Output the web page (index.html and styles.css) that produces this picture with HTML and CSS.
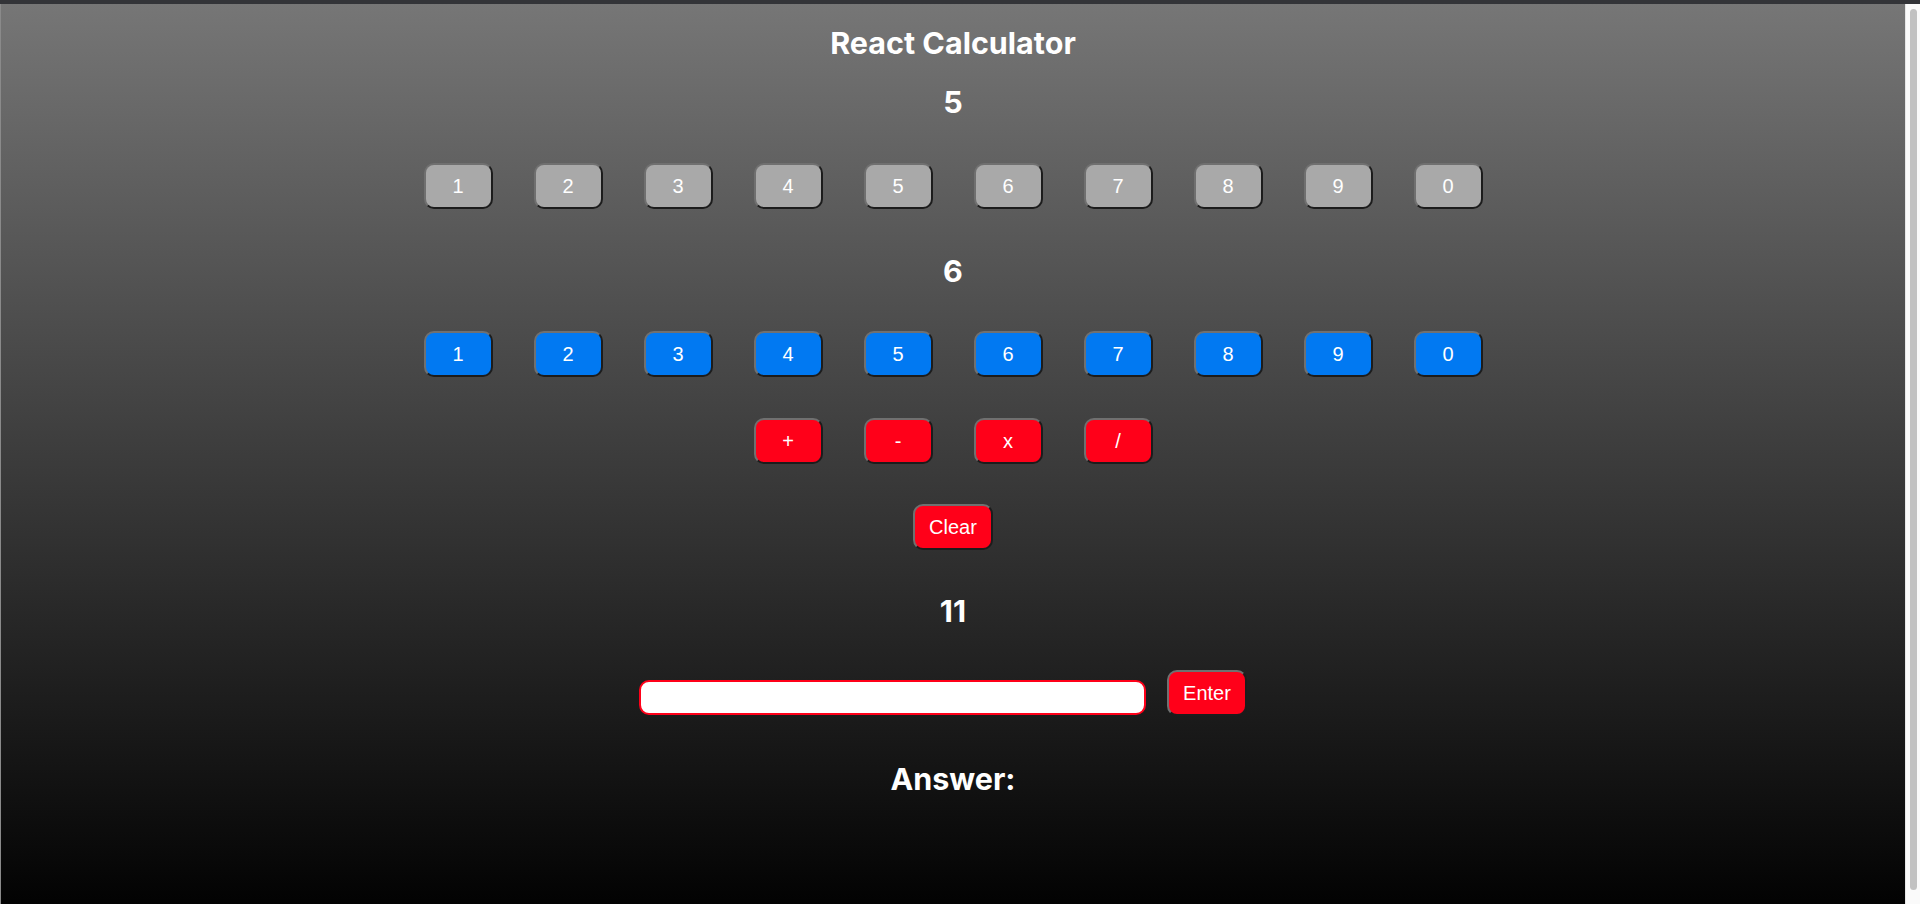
FILE: index.html
```html
<!DOCTYPE html>
<html lang="en">
<head>
<meta charset="utf-8">
<title>React Calculator</title>
<link rel="stylesheet" href="styles.css">
</head>
<body>
<div class="frame">
  <div class="topbar"></div>
  <div class="viewport">
    <main class="app">
      <h2 class="heading title">React Calculator</h2>
      <h2 class="heading first-num">5</h2>
      <div class="keys keys-first">
        <button class="btn digit grey">1</button>
        <button class="btn digit grey">2</button>
        <button class="btn digit grey">3</button>
        <button class="btn digit grey">4</button>
        <button class="btn digit grey">5</button>
        <button class="btn digit grey">6</button>
        <button class="btn digit grey">7</button>
        <button class="btn digit grey">8</button>
        <button class="btn digit grey">9</button>
        <button class="btn digit grey">0</button>
      </div>
      <h2 class="heading second-num">6</h2>
      <div class="keys keys-second">
        <button class="btn digit blue">1</button>
        <button class="btn digit blue">2</button>
        <button class="btn digit blue">3</button>
        <button class="btn digit blue">4</button>
        <button class="btn digit blue">5</button>
        <button class="btn digit blue">6</button>
        <button class="btn digit blue">7</button>
        <button class="btn digit blue">8</button>
        <button class="btn digit blue">9</button>
        <button class="btn digit blue">0</button>
      </div>
      <div class="keys keys-ops">
        <button class="btn digit red">+</button>
        <button class="btn digit red">-</button>
        <button class="btn digit red">x</button>
        <button class="btn digit red">/</button>
      </div>
      <div class="keys keys-clear">
        <button class="btn red wide">Clear</button>
      </div>
      <h2 class="heading result">11</h2>
      <div class="answer-row">
        <input class="answer-input" type="text" aria-label="Your answer">
        <button class="btn red wide enter">Enter</button>
      </div>
      <h2 class="heading answer">Answer:</h2>
    </main>
    <div class="scrollbar" aria-hidden="true">
      <div class="scrollbar-thumb"></div>
    </div>
  </div>
</div>
</body>
</html>
```

FILE: styles.css
```css
* {
  box-sizing: border-box;
}

html,
body {
  margin: 0;
  height: 100%;
  overflow: hidden;
  background: #000;
}

.frame {
  height: 100vh;
  display: flex;
  flex-direction: column;
}

.topbar {
  flex: 0 0 4px;
  background: #333438;
}

.viewport {
  flex: 1 1 auto;
  min-height: 0;
  display: flex;
  overflow: hidden;
  border-left: 1px solid #8a8a8a;
}

.app {
  flex: 1 1 auto;
  display: flex;
  flex-direction: column;
  align-items: center;
  height: 920px;
  padding: 21px 0 0;
  background: linear-gradient(to bottom, #767676 0%, #000 100%);
  color: #fff;
}

.scrollbar {
  flex: 0 0 15px;
  padding: 5px 3px 14px 4px;
  background: #fafafa;
  border-left: 1px solid #e6e6e6;
}

.scrollbar-thumb {
  height: 100%;
  background: #c1c1c1;
  border-radius: 4px;
}

.heading {
  margin: 0;
  font-family: Inter, "Noto Sans", sans-serif;
  font-weight: 700;
  font-size: 30.5px;
  line-height: 36px;
}

.first-num { margin-top: 23px; }
.keys-first { margin-top: 43px; }
.second-num { margin-top: 44px; }
.keys-second { margin-top: 42px; }
.keys-ops { margin-top: 41px; }
.keys-clear { margin-top: 40px; }
.result { margin-top: 43px; }
.answer-row { margin-top: 41px; }
.answer { margin-top: 45px; }

.keys {
  display: flex;
  justify-content: center;
  gap: 41px;
}

.btn {
  height: 46px;
  padding: 0 14px;
  border: 2px solid;
  border-color: #707070 #1c1c1c #1c1c1c #707070;
  border-radius: 10px;
  color: #fff;
  font-family: "Liberation Sans", Arial, sans-serif;
  font-size: 20px;
  line-height: 1;
  cursor: pointer;
}

.digit {
  width: 69px;
  padding: 0;
}

.grey {
  background: #a9a9a9;
}

.blue {
  background: #0179f2;
}

.red {
  background: #ff0019;
}

.answer-row {
  display: flex;
  align-items: flex-end;
  gap: 21px;
}

.answer-input {
  width: 507px;
  height: 35px;
  margin-bottom: 1px;
  border: 2px solid #ff0019;
  border-radius: 10px;
  background: #fff;
  font-family: "Liberation Sans", Arial, sans-serif;
  font-size: 18px;
  padding: 0 10px;
  outline: none;
}

.enter {
  height: 46px;
  margin-right: 20px;
}
```
